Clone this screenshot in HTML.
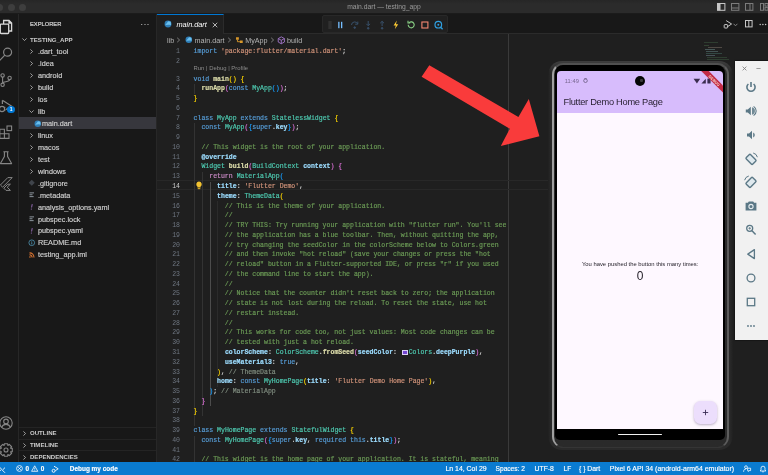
<!DOCTYPE html>
<html><head><meta charset="utf-8">
<style>
*{box-sizing:border-box;margin:0;padding:0}
html,body{width:768px;height:475px;overflow:hidden;background:#1f1f1f}
body{position:relative;font-family:"Liberation Sans",sans-serif;color:#ccc;font-size:7.1px}
.abs{position:absolute}
svg{position:absolute;overflow:visible}
#title{left:0;top:0;width:768px;height:14.4px;background:linear-gradient(180deg,#262626 0,#2b2b2b 4px);border-bottom:1px solid #1b1b1b}
#title .t{left:0;width:768px;top:2.9px;text-align:center;font-size:6.75px;color:#9a9a9a}
.tl{width:7.4px;height:7.4px;border-radius:50%;background:#3e3e3e;top:3.6px}
#act{left:0;top:14px;width:19px;height:448.5px;background:#181818;border-right:1px solid #272727}
#side{left:19px;top:14px;width:138px;height:448.5px;background:#181818;border-right:1px solid #272727}
.row{position:absolute;left:0;width:137px;height:11.95px}
.row.sel{background:#37373d}
.row .nm{position:absolute;top:1.6px;font-size:7.28px;color:#d0d0d0;white-space:nowrap;-webkit-text-stroke:.15px #d0d0d0}
.chev{left:8.6px;top:2.6px;width:7px;height:7px}
.fic{left:8.6px;top:2.2px;width:7.5px;height:7.5px}
.hd{position:absolute;font-size:6.05px;font-weight:bold;color:#ccc;white-space:nowrap}
.sec{position:absolute;left:0;width:137px;height:12px;border-top:1px solid #242424}
#tabs{left:157px;top:14px;width:611px;height:19.5px;background:#181818;border-bottom:1px solid #2b2b2b}
#tab{left:0;top:0;width:66.5px;height:19.5px;background:#1f1f1f;border-top:1px solid #0078d4;border-right:1px solid #2b2b2b}
.ln{position:absolute;left:160px;width:20px;text-align:right;font-family:"Liberation Mono",monospace;font-size:6.52px;line-height:10px;height:10px;color:#6e7681}
.ln.cur{color:#ccc}
.cl{position:absolute;left:193.6px;font-family:"Liberation Mono",monospace;font-size:6.52px;line-height:10px;height:10px;white-space:pre;color:#d4d4d4;-webkit-text-stroke:.18px}
.sw{display:inline-block;width:5.2px;height:5.2px;background:#7446d2;border:.7px solid #dccff6;margin:0 1px 0 1.6px;vertical-align:-.7px}
.bc{position:absolute;top:35.8px;font-size:7.2px;color:#b4b4b4;white-space:nowrap}
#status{left:0;top:462.4px;width:768px;height:13px;background:#0a7bd0;color:#fff;font-size:6.6px}
#status span{position:absolute;top:2.6px;white-space:nowrap;-webkit-text-stroke:.15px #fff}
#emu{left:735.4px;top:61px;width:40px;height:279px;background:#f1f1f1;box-shadow:0 0 1.5px #000}
#emu svg{left:7.9px;width:16px;height:16px}
.ai{left:-1.8px;width:16px;height:16px}
#root{position:absolute;left:-6px;top:-6px;width:780px;height:487px;overflow:hidden;background:#1f1f1f;filter:blur(.45px)}
#w{position:absolute;left:6px;top:6px;width:768px;height:475px}
</style></head><body><div id="root"><div id="w">
<div class="abs" style="left:-6px;top:-6px;width:780px;height:12px;background:#262626"></div>
<div class="abs" style="left:-6px;top:14px;width:10px;height:449px;background:#181818"></div>
<div class="abs" style="left:-6px;top:462.4px;width:780px;height:20px;background:#0a7bd0"></div>
<div class="abs" style="left:760px;top:0;width:14px;height:14.4px;background:#2b2b2b"></div>
<div class="abs" style="left:760px;top:14px;width:14px;height:19.500px;background:#181818;border-bottom:1px solid #2b2b2b"></div>

<!-- editor rulers / guides -->
<div class="abs" style="left:507.5px;top:34px;width:1px;height:429px;background:#3a3a3a"></div>
<div class="abs" style="left:157px;top:180.2px;width:575px;height:10.3px;border-top:1px solid #282828;border-bottom:1px solid #282828"></div>
<!-- indent guides -->
<div class="abs" style="left:193.9px;top:84px;width:1px;height:10px;background:#333"></div>
<div class="abs" style="left:193.9px;top:123px;width:1px;height:303px;background:#333"></div>
<div class="abs" style="left:201.7px;top:172px;width:1px;height:244px;background:#333"></div>
<div class="abs" style="left:209.5px;top:182px;width:1px;height:224px;background:#4c4c4c"></div>
<div class="abs" style="left:217.3px;top:201px;width:1px;height:186px;background:#2b2b2b"></div>
<div class="abs" style="left:193.9px;top:436px;width:1px;height:27px;background:#333"></div>

<!-- code -->
<div class="abs" style="left:193.6px;top:65.4px;font-size:5.9px;color:#8c8c8c;white-space:nowrap">Run | Debug | Profile</div>
<div class="ln" style="top:46.90px">1</div>
<div class="cl" style="top:46.90px"><span style="color:#569cd6">import</span><span style="color:#d4d4d4"> </span><span style="color:#ce9178">'package:flutter/material.dart'</span><span style="color:#d4d4d4">;</span></div>
<div class="ln" style="top:56.66px">2</div>
<div class="ln" style="top:74.60px">3</div>
<div class="cl" style="top:74.60px"><span style="color:#569cd6">void</span><span style="color:#d4d4d4"> </span><span style="color:#dcdcaa;font-weight:bold">main</span><span style="color:#ffd700">()</span><span style="color:#d4d4d4"> </span><span style="color:#ffd700">{</span></div>
<div class="ln" style="top:84.36px">4</div>
<div class="cl" style="top:84.36px"><span style="color:#d4d4d4">  </span><span style="color:#dcdcaa;font-weight:bold">runApp</span><span style="color:#da70d6">(</span><span style="color:#569cd6">const</span><span style="color:#d4d4d4"> </span><span style="color:#4ec9b0">MyApp</span><span style="color:#179fff">()</span><span style="color:#da70d6">)</span><span style="color:#d4d4d4">;</span></div>
<div class="ln" style="top:94.13px">5</div>
<div class="cl" style="top:94.13px"><span style="color:#ffd700">}</span></div>
<div class="ln" style="top:103.89px">6</div>
<div class="ln" style="top:113.66px">7</div>
<div class="cl" style="top:113.66px"><span style="color:#569cd6">class</span><span style="color:#d4d4d4"> </span><span style="color:#4ec9b0">MyApp</span><span style="color:#d4d4d4"> </span><span style="color:#569cd6">extends</span><span style="color:#d4d4d4"> </span><span style="color:#4ec9b0">StatelessWidget</span><span style="color:#d4d4d4"> </span><span style="color:#ffd700">{</span></div>
<div class="ln" style="top:123.43px">8</div>
<div class="cl" style="top:123.43px"><span style="color:#d4d4d4">  </span><span style="color:#569cd6">const</span><span style="color:#d4d4d4"> </span><span style="color:#4ec9b0">MyApp</span><span style="color:#da70d6">(</span><span style="color:#179fff">{</span><span style="color:#569cd6">super</span><span style="color:#d4d4d4">.</span><span style="color:#9cdcfe;font-weight:bold">key</span><span style="color:#179fff">}</span><span style="color:#da70d6">)</span><span style="color:#d4d4d4">;</span></div>
<div class="ln" style="top:133.19px">9</div>
<div class="ln" style="top:142.95px">10</div>
<div class="cl" style="top:142.95px"><span style="color:#6a9955">  // This widget is the root of your application.</span></div>
<div class="ln" style="top:152.72px">11</div>
<div class="cl" style="top:152.72px"><span style="color:#d4d4d4">  </span><span style="color:#9cdcfe;font-weight:bold">@override</span></div>
<div class="ln" style="top:162.49px">12</div>
<div class="cl" style="top:162.49px"><span style="color:#d4d4d4">  </span><span style="color:#4ec9b0">Widget</span><span style="color:#d4d4d4"> </span><span style="color:#dcdcaa;font-weight:bold">build</span><span style="color:#da70d6">(</span><span style="color:#4ec9b0">BuildContext</span><span style="color:#d4d4d4"> </span><span style="color:#9cdcfe;font-weight:bold">context</span><span style="color:#da70d6">)</span><span style="color:#d4d4d4"> </span><span style="color:#da70d6">{</span></div>
<div class="ln" style="top:172.25px">13</div>
<div class="cl" style="top:172.25px"><span style="color:#d4d4d4">    </span><span style="color:#c586c0">return</span><span style="color:#d4d4d4"> </span><span style="color:#4ec9b0">MaterialApp</span><span style="color:#179fff">(</span></div>
<div class="ln cur" style="top:182.01px">14</div>
<div class="cl" style="top:182.01px"><span style="color:#d4d4d4">      </span><span style="color:#9cdcfe;font-weight:bold">title</span><span style="color:#d4d4d4">: </span><span style="color:#ce9178">'Flutter Demo'</span><span style="color:#d4d4d4">,</span></div>
<div class="ln" style="top:191.78px">15</div>
<div class="cl" style="top:191.78px"><span style="color:#d4d4d4">      </span><span style="color:#9cdcfe;font-weight:bold">theme</span><span style="color:#d4d4d4">: </span><span style="color:#4ec9b0">ThemeData</span><span style="color:#ffd700">(</span></div>
<div class="ln" style="top:201.55px">16</div>
<div class="cl" style="top:201.55px"><span style="color:#6a9955">        // This is the theme of your application.</span></div>
<div class="ln" style="top:211.31px">17</div>
<div class="cl" style="top:211.31px"><span style="color:#6a9955">        //</span></div>
<div class="ln" style="top:221.08px">18</div>
<div class="cl" style="top:221.08px"><span style="color:#6a9955">        // TRY THIS: Try running your application with "flutter run". You'll see</span></div>
<div class="ln" style="top:230.84px">19</div>
<div class="cl" style="top:230.84px"><span style="color:#6a9955">        // the application has a blue toolbar. Then, without quitting the app,</span></div>
<div class="ln" style="top:240.60px">20</div>
<div class="cl" style="top:240.60px"><span style="color:#6a9955">        // try changing the seedColor in the colorScheme below to Colors.green</span></div>
<div class="ln" style="top:250.37px">21</div>
<div class="cl" style="top:250.37px"><span style="color:#6a9955">        // and then invoke "hot reload" (save your changes or press the "hot</span></div>
<div class="ln" style="top:260.13px">22</div>
<div class="cl" style="top:260.13px"><span style="color:#6a9955">        // reload" button in a Flutter-supported IDE, or press "r" if you used</span></div>
<div class="ln" style="top:269.90px">23</div>
<div class="cl" style="top:269.90px"><span style="color:#6a9955">        // the command line to start the app).</span></div>
<div class="ln" style="top:279.66px">24</div>
<div class="cl" style="top:279.66px"><span style="color:#6a9955">        //</span></div>
<div class="ln" style="top:289.43px">25</div>
<div class="cl" style="top:289.43px"><span style="color:#6a9955">        // Notice that the counter didn't reset back to zero; the application</span></div>
<div class="ln" style="top:299.20px">26</div>
<div class="cl" style="top:299.20px"><span style="color:#6a9955">        // state is not lost during the reload. To reset the state, use hot</span></div>
<div class="ln" style="top:308.96px">27</div>
<div class="cl" style="top:308.96px"><span style="color:#6a9955">        // restart instead.</span></div>
<div class="ln" style="top:318.73px">28</div>
<div class="cl" style="top:318.73px"><span style="color:#6a9955">        //</span></div>
<div class="ln" style="top:328.49px">29</div>
<div class="cl" style="top:328.49px"><span style="color:#6a9955">        // This works for code too, not just values: Most code changes can be</span></div>
<div class="ln" style="top:338.25px">30</div>
<div class="cl" style="top:338.25px"><span style="color:#6a9955">        // tested with just a hot reload.</span></div>
<div class="ln" style="top:348.02px">31</div>
<div class="cl" style="top:348.02px"><span style="color:#d4d4d4">        </span><span style="color:#9cdcfe;font-weight:bold">colorScheme</span><span style="color:#d4d4d4">: </span><span style="color:#4ec9b0">ColorScheme</span><span style="color:#d4d4d4">.</span><span style="color:#dcdcaa;font-weight:bold">fromSeed</span><span style="color:#da70d6">(</span><span style="color:#9cdcfe;font-weight:bold">seedColor</span><span style="color:#d4d4d4">: </span><span class="sw"></span><span style="color:#4ec9b0">Colors</span><span style="color:#d4d4d4">.</span><span style="color:#9cdcfe;font-weight:bold">deepPurple</span><span style="color:#da70d6">)</span><span style="color:#d4d4d4">,</span></div>
<div class="ln" style="top:357.78px">32</div>
<div class="cl" style="top:357.78px"><span style="color:#d4d4d4">        </span><span style="color:#9cdcfe;font-weight:bold">useMaterial3</span><span style="color:#d4d4d4">: </span><span style="color:#569cd6">true</span><span style="color:#d4d4d4">,</span></div>
<div class="ln" style="top:367.55px">33</div>
<div class="cl" style="top:367.55px"><span style="color:#d4d4d4">      </span><span style="color:#ffd700">)</span><span style="color:#d4d4d4">, </span><span style="color:#7f8c7f">// ThemeData</span></div>
<div class="ln" style="top:377.32px">34</div>
<div class="cl" style="top:377.32px"><span style="color:#d4d4d4">      </span><span style="color:#9cdcfe;font-weight:bold">home</span><span style="color:#d4d4d4">: </span><span style="color:#569cd6">const</span><span style="color:#d4d4d4"> </span><span style="color:#4ec9b0">MyHomePage</span><span style="color:#ffd700">(</span><span style="color:#9cdcfe;font-weight:bold">title</span><span style="color:#d4d4d4">: </span><span style="color:#ce9178">'Flutter Demo Home Page'</span><span style="color:#ffd700">)</span><span style="color:#d4d4d4">,</span></div>
<div class="ln" style="top:387.08px">35</div>
<div class="cl" style="top:387.08px"><span style="color:#d4d4d4">    </span><span style="color:#179fff">)</span><span style="color:#d4d4d4">; </span><span style="color:#7f8c7f">// MaterialApp</span></div>
<div class="ln" style="top:396.85px">36</div>
<div class="cl" style="top:396.85px"><span style="color:#d4d4d4">  </span><span style="color:#da70d6">}</span></div>
<div class="ln" style="top:406.61px">37</div>
<div class="cl" style="top:406.61px"><span style="color:#ffd700">}</span></div>
<div class="ln" style="top:416.38px">38</div>
<div class="ln" style="top:426.14px">39</div>
<div class="cl" style="top:426.14px"><span style="color:#569cd6">class</span><span style="color:#d4d4d4"> </span><span style="color:#4ec9b0">MyHomePage</span><span style="color:#d4d4d4"> </span><span style="color:#569cd6">extends</span><span style="color:#d4d4d4"> </span><span style="color:#4ec9b0">StatefulWidget</span><span style="color:#d4d4d4"> </span><span style="color:#ffd700">{</span></div>
<div class="ln" style="top:435.90px">40</div>
<div class="cl" style="top:435.90px"><span style="color:#d4d4d4">  </span><span style="color:#569cd6">const</span><span style="color:#d4d4d4"> </span><span style="color:#4ec9b0">MyHomePage</span><span style="color:#da70d6">(</span><span style="color:#179fff">{</span><span style="color:#569cd6">super</span><span style="color:#d4d4d4">.</span><span style="color:#9cdcfe;font-weight:bold">key</span><span style="color:#d4d4d4">, </span><span style="color:#569cd6">required</span><span style="color:#d4d4d4"> </span><span style="color:#569cd6">this</span><span style="color:#d4d4d4">.</span><span style="color:#9cdcfe;font-weight:bold">title</span><span style="color:#179fff">}</span><span style="color:#da70d6">)</span><span style="color:#d4d4d4">;</span></div>
<div class="ln" style="top:445.67px">41</div>
<div class="ln" style="top:455.44px">42</div>
<div class="cl" style="top:455.44px"><span style="color:#6a9955">  // This widget is the home page of your application. It is stateful, meaning</span></div>
<!-- lightbulb -->
<svg style="left:195.2px;top:181px;width:8px;height:9px" viewBox="0 0 8 9"><path d="M4 .6a2.7 2.7 0 0 0-1.6 4.9v1h3.2v-1A2.7 2.7 0 0 0 4 .6z" fill="#f2c230"/><rect x="2.7" y="7" width="2.6" height="1.2" fill="#caa22a"/></svg>

<!-- minimap -->
<div class="abs" style="left:704px;top:41px;width:34px;height:20px;opacity:.33">
 <div class="abs" style="left:0;top:1px;width:14px;height:1px;background:#4f7a55"></div>
 <div class="abs" style="left:0;top:4px;width:5px;height:1px;background:#5a8a5a"></div>
 <div class="abs" style="left:4px;top:5.5px;width:14px;height:1px;background:#b0a090"></div>
 <div class="abs" style="left:1px;top:8px;width:10px;height:1px;background:#9cc"></div>
 <div class="abs" style="left:2px;top:10px;width:12px;height:1px;background:#8bb"></div>
 <div class="abs" style="left:2px;top:12px;width:16px;height:1px;background:#5a9a8a"></div>
 <div class="abs" style="left:2px;top:14px;width:9px;height:1px;background:#9bc"></div>
 <div class="abs" style="left:3px;top:16px;width:20px;height:1px;background:#4f7a55"></div>
 <div class="abs" style="left:3px;top:18px;width:22px;height:1px;background:#4f7a55"></div>
</div>

<!-- red arrow -->
<svg style="left:0;top:0;width:768px;height:475px" viewBox="0 0 768 475"><polygon points="429.3,65.3 518.4,117 528.8,99 539.4,136.2 500.8,146 509.8,128.8 421.6,76.8" fill="#f93b3b"/></svg>

<!-- title bar -->
<div id="title" class="abs">
 <div class="abs tl" style="left:-4px"></div><div class="abs tl" style="left:7.6px"></div><div class="abs tl" style="left:18.8px"></div>
 <div class="abs t">main.dart — testing_app</div>
 <svg style="left:717px;top:3px;width:8.4px;height:7.8px" viewBox="0 0 8.4 7.8"><rect x=".5" y=".5" width="7.4" height="6.8" fill="none" stroke="#c8c8c8" stroke-width="1"/><rect x=".5" y=".5" width="3" height="6.8" fill="#c8c8c8"/></svg>
 <svg style="left:731px;top:3px;width:8.4px;height:7.8px" viewBox="0 0 8.4 7.8"><rect x=".5" y=".5" width="7.4" height="6.8" fill="none" stroke="#7c7c7c" stroke-width="1"/><path d="M.5 5H7.9" stroke="#7c7c7c" stroke-width="1"/></svg>
 <svg style="left:744.7px;top:3px;width:8.4px;height:7.8px" viewBox="0 0 8.4 7.8"><rect x=".5" y=".5" width="7.4" height="6.8" fill="none" stroke="#7c7c7c" stroke-width="1"/><path d="M5 .5V7.3" stroke="#7c7c7c" stroke-width="1"/></svg>
 <svg style="left:760px;top:3px;width:8.4px;height:7.8px" viewBox="0 0 8.4 7.8"><rect x=".5" y=".5" width="3" height="6.8" fill="none" stroke="#7c7c7c" stroke-width="1"/><rect x="5" y=".5" width="3" height="2.6" fill="none" stroke="#7c7c7c" stroke-width="1"/><rect x="5" y="4.6" width="3" height="2.6" fill="none" stroke="#7c7c7c" stroke-width="1"/></svg>
</div>

<!-- tabs -->
<div id="tabs" class="abs">
 <div id="tab" class="abs">
  <svg style="left:7.3px;top:5.2px;width:8px;height:8px" viewBox="0 0 10 10"><circle cx="5" cy="5" r="4.3" fill="#2f7fb8"/><path d="M1.6 6.2 L5.4 1.6 L8.4 2.2 L8.8 6.400 L6.2 5.8 Z" fill="#6cc0ee"/></svg>
  <span class="abs" style="left:19.4px;top:5.4px;font-size:7.3px;font-style:italic;color:#fff;white-space:nowrap">main.dart</span>
  <svg style="left:55.2px;top:6.6px;width:6px;height:6px" viewBox="0 0 8 8"><path d="M1 1L7 7M7 1L1 7" stroke="#d0d0d0" stroke-width="1.1"/></svg>
 </div>
 <!-- debug toolbar -->
 <div class="abs" style="left:165.3px;top:1px;width:126px;height:17.8px;background:#202020;border:1px solid #282828;border-radius:2px">
  <svg style="left:0;top:0;width:126px;height:16px" viewBox="323 15 126 16">
   <g fill="#5a5a5a"><rect x="328.6" y="20.5" width="1" height="1"/><rect x="330.4" y="20.5" width="1" height="1"/><rect x="328.6" y="22.5" width="1" height="1"/><rect x="330.4" y="22.5" width="1" height="1"/><rect x="328.6" y="24.5" width="1" height="1"/><rect x="330.4" y="24.5" width="1" height="1"/><rect x="328.6" y="26.5" width="1" height="1"/><rect x="330.4" y="26.5" width="1" height="1"/></g>
   <g fill="#75beff"><rect x="338.2" y="20.8" width="1.3" height="6.4"/><rect x="341" y="20.8" width="1.3" height="6.4"/></g>
   <g stroke="#38506a" fill="none" stroke-width="1"><path d="M351.5 24a3.2 3.2 0 0 1 6.2-1M357.8 20.6v2.6h-2.6"/><circle cx="354.7" cy="26.6" r=".8" fill="#38506a"/>
    <path d="M368.2 20v4.6M366.3 22.8l1.9 1.9 1.9-1.9"/><circle cx="368.2" cy="27.3" r=".8" fill="#38506a"/>
    <path d="M382.1 25v-4.6M380.2 22.2l1.9-1.9 1.9 1.9"/><circle cx="382.1" cy="27.3" r=".8" fill="#38506a"/></g>
   <path d="M396.8 19.6l-3.2 4.8h2.2l-1 3.8 3.4-5h-2.2z" fill="#ffcc33"/>
   <path d="M408.2 23.8a3 3 0 1 0 1-2.2M408 19.8v2.2h2.2" fill="none" stroke="#89d185" stroke-width="1.1"/>
   <rect x="421.9" y="21" width="6" height="6" fill="none" stroke="#f48771" stroke-width="1.1"/>
   <circle cx="438.3" cy="23.7" r="3.3" fill="none" stroke="#2f9fe0" stroke-width="1.2"/><path d="M440.6 26.2l2 2" stroke="#2f9fe0" stroke-width="1.3"/><circle cx="438.3" cy="23.7" r="1" fill="#2f9fe0"/>
  </svg>
 </div>
 <!-- editor actions -->
 <svg style="left:565.5px;top:4.5px;width:12px;height:11px" viewBox="0 0 12 11"><path d="M3.2 1.6L8.6 5 4.6 7.6" fill="none" stroke="#c8c8c8" stroke-width="1"/><rect x="1.2" y="5.6" width="3.4" height="3.4" rx=".6" fill="none" stroke="#c8c8c8" stroke-width="1"/></svg>
 <svg style="left:576px;top:8.5px;width:5px;height:4px" viewBox="0 0 5 4"><path d="M.6.8L2.5 2.8 4.4.8" fill="none" stroke="#8a8a8a" stroke-width=".9"/></svg>
 <svg style="left:587.8px;top:6.2px;width:7.6px;height:7.4px" viewBox="0 0 7.6 7.4"><rect x=".5" y=".5" width="6.6" height="6.4" fill="none" stroke="#c8c8c8" stroke-width="1"/><path d="M3.8.5V6.9" stroke="#c8c8c8" stroke-width="1"/></svg>
 <svg style="left:602px;top:9.2px;width:8px;height:3px" viewBox="0 0 8 3"><circle cx="1.2" cy="1.4" r=".75" fill="#c8c8c8"/><circle cx="3.9" cy="1.4" r=".75" fill="#c8c8c8"/><circle cx="6.6" cy="1.4" r=".75" fill="#c8c8c8"/></svg>
</div>

<!-- breadcrumbs -->
<div class="bc" style="left:167px">lib</div>
<svg style="left:176px;top:37px;width:5px;height:6px" viewBox="0 0 5 6"><path d="M1.2.8L3.6 3 1.2 5.2" fill="none" stroke="#888" stroke-width=".9"/></svg>
<svg style="left:184.5px;top:36.2px;width:7.6px;height:7.6px" viewBox="0 0 10 10"><circle cx="5" cy="5" r="4.3" fill="#2f7fb8"/><path d="M1.6 6.2 L5.4 1.6 L8.4 2.2 L8.8 6.400 L6.2 5.8 Z" fill="#6cc0ee"/></svg>
<div class="bc" style="left:194.6px">main.dart</div>
<svg style="left:227px;top:37px;width:5px;height:6px" viewBox="0 0 5 6"><path d="M1.2.8L3.6 3 1.2 5.2" fill="none" stroke="#888" stroke-width=".9"/></svg>
<svg style="left:234.6px;top:36px;width:8.4px;height:8.4px" viewBox="0 0 10 10"><path d="M1.200 1.600h3.400v2.800H1.200zM5.800 5.400h3.400v2.800H5.800z" fill="#d9982a"/><path d="M2.900 4.400v2.400h3" fill="none" stroke="#d9982a" stroke-width="1.100"/></svg>
<div class="bc" style="left:245.2px">MyApp</div>
<svg style="left:270px;top:37px;width:5px;height:6px" viewBox="0 0 5 6"><path d="M1.2.8L3.6 3 1.2 5.2" fill="none" stroke="#888" stroke-width=".9"/></svg>
<svg style="left:276.8px;top:35.8px;width:8.6px;height:8.6px" viewBox="0 0 10 10"><path d="M5 1L8.6 3v4L5 9 1.4 7V3z M1.4 3L5 5l3.6-2M5 5v4" fill="none" stroke="#a477cc" stroke-width="1.05"/></svg>
<div class="bc" style="left:287px">build</div>

<!-- activity bar -->
<div id="act" class="abs">
<svg class="ai" style="top:5.4px" viewBox="0 0 16 16"><path d="M5.6 5V1.5H11L13.6 4.100V12H10.8M11 1.5V4.100H13.6" fill="none" stroke="#d9d9d9" stroke-width="1.3"/><rect x="2.3" y="5.1" width="8.4" height="9.4" rx=".8" fill="none" stroke="#d9d9d9" stroke-width="1.3"/></svg>
<svg class="ai" style="top:32.0px" viewBox="0 0 16 16"><circle cx="9.6" cy="6.2" r="4" fill="none" stroke="#868686" stroke-width="1.2"/><path d="M6.8 9.2L1.8 14.4" stroke="#868686" stroke-width="1.2"/></svg>
<svg class="ai" style="top:58.0px" viewBox="0 0 16 16"><circle cx="4.6" cy="3.4" r="1.7" fill="none" stroke="#868686" stroke-width="1.1"/><circle cx="4.6" cy="12.8" r="1.7" fill="none" stroke="#868686" stroke-width="1.1"/><circle cx="11.6" cy="6" r="1.7" fill="none" stroke="#868686" stroke-width="1.1"/><path d="M4.6 5.1v6M11.6 7.7c0 2.6-7 1.4-7 3.6" fill="none" stroke="#868686" stroke-width="1.1"/></svg>
<svg class="ai" style="top:84.0px" viewBox="0 0 16 16"><path d="M4.4 2.2L13.4 8 7.6 11.8M4.4 2.2V6" fill="none" stroke="#868686" stroke-width="1.2"/><circle cx="4" cy="11" r="2.6" fill="none" stroke="#868686" stroke-width="1.1"/><path d="M.4 9.4h1.4M.4 12.6h1.4M6.2 9.4h1.2M6.2 12.6h1.2" stroke="#868686" stroke-width=".9"/></svg>
<div class="abs" style="left:7.4px;top:91.9px;width:7.4px;height:7.4px;border-radius:50%;background:#0078d4;color:#fff;font-size:5px;font-weight:bold;text-align:center;line-height:7.4px">1</div>
<svg class="ai" style="top:110.0px" viewBox="0 0 16 16"><path d="M1.8 5.2h4.6v4.6H1.8zM6.4 9.8h4.6v4.6H6.4zM1.8 9.8v4.6h4.6" fill="none" stroke="#868686" stroke-width="1.1"/><rect x="9" y="2" width="4.6" height="4.6" fill="none" stroke="#868686" stroke-width="1.1"/></svg>
<svg class="ai" style="top:136.0px" viewBox="0 0 16 16"><path d="M5.4 1.8h5.2M6.4 1.8v4.6L2.4 13.6h11.2L9.6 6.4V1.8" fill="none" stroke="#868686" stroke-width="1.1" stroke-linejoin="round"/></svg>
<svg class="ai" style="top:162.0px" viewBox="0 0 16 16"><path d="M9.8 1.6L2.4 9l2.2 2.2 9.6-9.6zM9.8 8.2l-4 4 2.2 2.2h4.4l-3.2-3.2 3.2-3z" fill="none" stroke="#868686" stroke-width="1" stroke-linejoin="round"/></svg>
<svg class="ai" style="top:401.2px" viewBox="0 0 16 16"><circle cx="8" cy="8" r="6.2" fill="none" stroke="#868686" stroke-width="1.1"/><circle cx="8" cy="6.4" r="2.3" fill="none" stroke="#868686" stroke-width="1.1"/><path d="M3.6 12.4c.8-2.2 2.4-3 4.4-3s3.600.8 4.400 3" fill="none" stroke="#868686" stroke-width="1.1"/></svg>
<svg class="ai" style="top:427.8px" viewBox="0 0 16 16"><polygon points="14.28,6.33 14.28,9.67 12.53,9.86 12.52,9.89 13.62,11.26 11.26,13.62 9.89,12.52 9.86,12.53 9.67,14.28 6.33,14.28 6.14,12.53 6.11,12.52 4.74,13.62 2.38,11.26 3.48,9.89 3.47,9.86 1.72,9.67 1.72,6.33 3.47,6.14 3.48,6.11 2.38,4.74 4.74,2.38 6.11,3.48 6.14,3.47 6.33,1.72 9.67,1.72 9.86,3.47 9.89,3.48 11.26,2.38 13.62,4.74 12.52,6.11 12.53,6.14" fill="none" stroke="#868686" stroke-width="1.1" stroke-linejoin="round"/><circle cx="8" cy="8" r="2" fill="none" stroke="#868686" stroke-width="1.1"/></svg>
</div>

<!-- sidebar -->
<div id="side" class="abs">
 <div class="abs" style="left:11px;top:7.2px;font-size:5.75px;color:#d2d2d2;letter-spacing:0;-webkit-text-stroke:.2px #d2d2d2">EXPLORER</div>
 <div class="abs" style="left:121.2px;top:5.2px;font-size:9px;color:#ccc;letter-spacing:.2px">···</div>
 <svg style="left:2.2px;top:22.2px;width:7px;height:7px" viewBox="0 0 10 10"><path d="M2 3.5 L5 6.5 L8 3.5" fill="none" stroke="#c5c5c5" stroke-width="1.1"/></svg>
 <div class="hd" style="left:11px;top:22.4px;font-size:6.15px">TESTING_APP</div>
 <div class="abs" style="left:0;top:-14px;width:137px;height:400px">
<div class="row" style="top:45.62px"><svg class="chev" viewBox="0 0 10 10"><path d="M3.5 2 L6.5 5 L3.5 8" fill="none" stroke="#c5c5c5" stroke-width="1.1"/></svg><span class="nm" style="left:19px">.dart_tool</span></div>
<div class="row" style="top:57.57px"><svg class="chev" viewBox="0 0 10 10"><path d="M3.5 2 L6.5 5 L3.5 8" fill="none" stroke="#c5c5c5" stroke-width="1.1"/></svg><span class="nm" style="left:19px">.idea</span></div>
<div class="row" style="top:69.53px"><svg class="chev" viewBox="0 0 10 10"><path d="M3.5 2 L6.5 5 L3.5 8" fill="none" stroke="#c5c5c5" stroke-width="1.1"/></svg><span class="nm" style="left:19px">android</span></div>
<div class="row" style="top:81.47px"><svg class="chev" viewBox="0 0 10 10"><path d="M3.5 2 L6.5 5 L3.5 8" fill="none" stroke="#c5c5c5" stroke-width="1.1"/></svg><span class="nm" style="left:19px">build</span></div>
<div class="row" style="top:93.43px"><svg class="chev" viewBox="0 0 10 10"><path d="M3.5 2 L6.5 5 L3.5 8" fill="none" stroke="#c5c5c5" stroke-width="1.1"/></svg><span class="nm" style="left:19px">ios</span></div>
<div class="row" style="top:105.38px"><svg class="chev" viewBox="0 0 10 10"><path d="M2 3.5 L5 6.5 L8 3.5" fill="none" stroke="#c5c5c5" stroke-width="1.1"/></svg><span class="nm" style="left:19px">lib</span></div>
<div class="row sel" style="top:117.32px"><svg class="fic" style="left:14.6px" viewBox="0 0 10 10"><circle cx="5" cy="5" r="4.3" fill="#2f7fb8"/><path d="M1.6 6.2 L5.4 1.6 L8.4 2.2 L8.8 6.400 L6.2 5.8 Z" fill="#6cc0ee"/></svg><span class="nm" style="left:23px">main.dart</span></div>
<div class="row" style="top:129.28px"><svg class="chev" viewBox="0 0 10 10"><path d="M3.5 2 L6.5 5 L3.5 8" fill="none" stroke="#c5c5c5" stroke-width="1.1"/></svg><span class="nm" style="left:19px">linux</span></div>
<div class="row" style="top:141.22px"><svg class="chev" viewBox="0 0 10 10"><path d="M3.5 2 L6.5 5 L3.5 8" fill="none" stroke="#c5c5c5" stroke-width="1.1"/></svg><span class="nm" style="left:19px">macos</span></div>
<div class="row" style="top:153.18px"><svg class="chev" viewBox="0 0 10 10"><path d="M3.5 2 L6.5 5 L3.5 8" fill="none" stroke="#c5c5c5" stroke-width="1.1"/></svg><span class="nm" style="left:19px">test</span></div>
<div class="row" style="top:165.12px"><svg class="chev" viewBox="0 0 10 10"><path d="M3.5 2 L6.5 5 L3.5 8" fill="none" stroke="#c5c5c5" stroke-width="1.1"/></svg><span class="nm" style="left:19px">windows</span></div>
<div class="row" style="top:177.07px"><svg class="fic" viewBox="0 0 10 10"><rect x="2.2" y="2.2" width="5.6" height="5.6" transform="rotate(45 5 5)" fill="#3f444b"/></svg><span class="nm" style="left:19px">.gitignore</span></div>
<div class="row" style="top:189.02px"><svg class="fic" viewBox="0 0 10 10"><path d="M2 2.5H8M2 5H6M2 7.5H7.5" stroke="#9aa4ad" stroke-width="1.2"/></svg><span class="nm" style="left:19px">.metadata</span></div>
<div class="row" style="top:200.97px"><svg class="fic" viewBox="0 0 10 10"><path d="M5.6 1.5 L4.8 6" stroke="#a074c4" stroke-width="1.2"/><circle cx="4.5" cy="8" r=".8" fill="#a074c4"/></svg><span class="nm" style="left:19px">analysis_options.yaml</span></div>
<div class="row" style="top:212.92px"><svg class="fic" viewBox="0 0 10 10"><path d="M2 2.5H8M2 5H6M2 7.5H7.5" stroke="#9aa4ad" stroke-width="1.2"/></svg><span class="nm" style="left:19px">pubspec.lock</span></div>
<div class="row" style="top:224.88px"><svg class="fic" viewBox="0 0 10 10"><path d="M5.6 1.5 L4.8 6" stroke="#a074c4" stroke-width="1.2"/><circle cx="4.5" cy="8" r=".8" fill="#a074c4"/></svg><span class="nm" style="left:19px">pubspec.yaml</span></div>
<div class="row" style="top:236.82px"><svg class="fic" viewBox="0 0 10 10"><circle cx="5" cy="5" r="3.8" fill="none" stroke="#519aba" stroke-width="1"/><path d="M5 4.3V7.2" stroke="#519aba" stroke-width="1.1"/><circle cx="5" cy="3" r=".6" fill="#519aba"/></svg><span class="nm" style="left:19px">README.md</span></div>
<div class="row" style="top:248.77px"><svg class="fic" viewBox="0 0 10 10"><path d="M2 2.5 A6 6 0 0 1 8 8.5 M2 5 A3.5 3.5 0 0 1 5.5 8.5" fill="none" stroke="#e37933" stroke-width="1.4"/><circle cx="2.6" cy="7.9" r="1" fill="#e37933"/></svg><span class="nm" style="left:19px">testing_app.iml</span></div>
 </div>
 <div class="sec" style="top:412.6px"><svg class="chev" style="left:2.2px;top:2.6px" viewBox="0 0 10 10"><path d="M3.5 2 L6.5 5 L3.5 8" fill="none" stroke="#c5c5c5" stroke-width="1.1"/></svg><div class="hd" style="left:11px;top:2.5px">OUTLINE</div></div>
 <div class="sec" style="top:424.5px"><svg class="chev" style="left:2.2px;top:2.6px" viewBox="0 0 10 10"><path d="M3.5 2 L6.5 5 L3.5 8" fill="none" stroke="#c5c5c5" stroke-width="1.1"/></svg><div class="hd" style="left:11px;top:2.5px">TIMELINE</div></div>
 <div class="sec" style="top:436.4px"><svg class="chev" style="left:2.2px;top:2.6px" viewBox="0 0 10 10"><path d="M3.5 2 L6.5 5 L3.5 8" fill="none" stroke="#c5c5c5" stroke-width="1.1"/></svg><div class="hd" style="left:11px;top:2.5px">DEPENDENCIES</div></div>
</div>

<!-- status bar -->
<div id="status" class="abs">
 <svg style="left:-2px;top:3.2px;width:8px;height:7px" viewBox="0 0 8 7"><path d="M1 .6L3.600 3.200 1 5.800M7 1.600L4.400 4.200 7 6.800" fill="none" stroke="#fff" stroke-width=".9"/></svg>
 <svg style="left:16.2px;top:3px;width:7px;height:7px" viewBox="0 0 7 7"><circle cx="3.5" cy="3.5" r="2.9" fill="none" stroke="#fff" stroke-width=".8"/><path d="M2.2 2.2l2.6 2.6M4.8 2.2L2.2 4.8" stroke="#fff" stroke-width=".8"/></svg>
 <span style="left:25.4px;font-weight:bold;font-size:6.4px">0</span>
 <svg style="left:30.6px;top:2.8px;width:7.4px;height:7px" viewBox="0 0 7.4 7"><path d="M3.7.8L6.8 6.3H.6z" fill="none" stroke="#fff" stroke-width=".8"/><path d="M3.7 2.8v1.8M3.7 5.1v.6" stroke="#fff" stroke-width=".7"/></svg>
 <span style="left:40.7px;font-weight:bold;font-size:6.4px">0</span>
 <svg style="left:51px;top:2.6px;width:9px;height:8px" viewBox="0 0 9 8"><path d="M3 1.2L7.2 3.8 4.4 5.6" fill="none" stroke="#fff" stroke-width=".9"/><circle cx="2.6" cy="5.8" r="1.5" fill="none" stroke="#fff" stroke-width=".9"/></svg>
 <span style="left:69.8px;font-weight:bold;font-size:6.45px">Debug my code</span>
 <span style="left:445.4px;font-size:6.95px;top:2.4px">Ln 14, Col 29</span>
 <span style="left:495.6px">Spaces: 2</span>
 <span style="left:534.6px;font-size:6.8px">UTF-8</span>
 <span style="left:563.6px">LF</span>
 <span style="left:579px;font-size:6.8px">{ } Dart</span>
 <span style="left:609.8px;font-size:6.97px;top:2.4px">Pixel 6 API 34 (android-arm64 emulator)</span>
 <svg style="left:742.5px;top:2.8px;width:8px;height:8px" viewBox="0 0 8 8"><circle cx="3" cy="2.2" r="1.4" fill="none" stroke="#fff" stroke-width=".8"/><path d="M.6 6.8c0-2 1-2.8 2.4-2.8M4.6 3.2h3v2.4H6.2l-.8.9v-.9h-.8z" fill="none" stroke="#fff" stroke-width=".8"/></svg>
 <svg style="left:758.6px;top:2.8px;width:8px;height:8px" viewBox="0 0 8 8"><path d="M1.2 6h5.6L6 4.8V3.2a2 2 0 0 0-4 0v1.6zM3.2 6.8h1.6" fill="none" stroke="#fff" stroke-width=".8"/></svg>
</div>

<!-- phone -->
<div class="abs" style="left:548.3px;top:60.5px;width:185px;height:389.3px;border-radius:14px;background:linear-gradient(90deg,#1f1f1f 0,rgba(31,31,31,0) 3.2px,rgba(31,31,31,0) 181.5px,#202020 185px),linear-gradient(180deg,#3e3e3e 0,#363636 4px,#2b2b2b 12px,#2a2a2a 100%)"></div>
<div class="abs" style="left:552.2px;top:62.5px;width:176.4px;height:385px;border-radius:11.5px;border-style:solid;border-width:2.1px 2.8px 1.6px 2.5px;border-color:#505050 #5c5c5c #353535 #a0a0a0;filter:blur(.45px)"></div>
<div class="abs" style="left:554.9px;top:64.8px;width:169.9px;height:374.8px;border-radius:8px 8px 5px 5px;background:#000"></div>
<div class="abs" style="left:557.2px;top:71px;width:165.7px;height:367.8px;background:#000;border-radius:4px 4px 3px 3px;overflow:hidden">
 <div class="abs" style="left:0;top:0;width:166px;height:42.2px;background:#d7bcfc"></div>
 <div class="abs" style="left:0;top:42.2px;width:166px;height:316.2px;background:#fef8ff"></div>
 <!-- status -->
 <div class="abs" style="left:7.6px;top:7.2px;font-size:5.7px;color:#77668f;letter-spacing:.1px">11:49</div>
 <svg style="left:26px;top:7.4px;width:5px;height:5px" viewBox="0 0 5 5"><circle cx="2.5" cy="2.7" r="1.8" fill="none" stroke="#6a5a80" stroke-width=".8"/><path d="M1.3.7h2.4" stroke="#6a5a80" stroke-width=".8"/></svg>
 <div class="abs" style="left:77.6px;top:4.8px;width:10.4px;height:10.4px;border-radius:50%;background:#050505"></div>
 <div class="abs" style="left:83.2px;top:8.4px;width:2.2px;height:2.2px;border-radius:50%;background:#3a3a3a"></div>
 <svg style="left:136px;top:6.6px;width:24px;height:6px" viewBox="0 0 24 6"><path d="M.6.8h6.6L3.9 5.4z" fill="#3a2c4e"/><path d="M8.4 5.4h4.4V.8z" fill="#3a2c4e"/><rect x="14.4" y=".4" width="3.2" height="5" rx=".5" fill="#3a2c4e"/></svg>
 <!-- debug banner -->
 <svg style="left:135px;top:0;width:31px;height:31px" viewBox="0 0 31 31"><path d="M9.2 0H16.8L31 14.4V21.600z" fill="#c22b46"/><text x="21.4" y="10.6" font-size="3.7" font-weight="bold" fill="#ffe2d4" transform="rotate(45 21.4 10.6)" text-anchor="middle" font-family="Liberation Sans" letter-spacing=".2">DEBUG</text></svg>
 <div class="abs" style="left:6.4px;top:25.6px;font-size:9.25px;color:#2a2233;letter-spacing:-.27px;white-space:nowrap">Flutter Demo Home Page</div>
 <div class="abs" style="left:0;top:190.2px;width:166px;text-align:center;font-size:5.85px;color:#26222b;white-space:nowrap">You have pushed the button this many times:</div>
 <div class="abs" style="left:0;top:198.2px;width:166px;text-align:center;font-size:12px;color:#26222b">0</div>
 <!-- fab -->
 <div class="abs" style="left:136.4px;top:330.2px;width:23px;height:22.8px;border-radius:6.5px;background:#ecdefc;box-shadow:0 1px 2.5px rgba(60,40,90,.35)"></div>
 <svg style="left:144.4px;top:338.2px;width:7px;height:7px" viewBox="0 0 7 7"><path d="M3.5.8v5.4M.8 3.5h5.4" stroke="#3a2d55" stroke-width=".9"/></svg>
 <!-- nav pill -->
 <div class="abs" style="left:60.8px;top:362.6px;width:43.8px;height:1.9px;border-radius:1px;background:#f2f2f2"></div>
</div>

<!-- emulator toolbar -->
<div id="emu" class="abs">
 <svg style="left:7px;top:5.2px;width:5px;height:5px" viewBox="0 0 5 5"><path d="M.6.6l3.8 3.8M4.4.6L.6 4.4" stroke="#7a7a7a" stroke-width=".8"/></svg>
 <svg style="left:20.8px;top:5.4px;width:5px;height:5px" viewBox="0 0 5 5"><path d="M.4 2.5h4.2" stroke="#8a8a8a" stroke-width=".8"/></svg>
<svg style="top:17.8px" viewBox="0 0 16 16"><path d="M5.400 5a4.100 4.100 0 1 0 5.200 0" fill="none" stroke="#5b7886" stroke-width="1.600"/><path d="M8 3.100v5" stroke="#5b7886" stroke-width="1.600"/></svg>
<svg style="top:41.7px" viewBox="0 0 16 16"><path d="M2.800 6.500h2L7.800 3.800v8.400L4.800 9.500h-2z" fill="#5b7886"/><path d="M9 4.300a3.800 3.800 0 0 1 0 7.400z" fill="#5b7886" opacity=".85"/><path d="M10.600 3.400a5.400 5.400 0 0 1 0 9.200" fill="none" stroke="#5b7886" stroke-width="1.100"/></svg>
<svg style="top:65.6px" viewBox="0 0 16 16"><path d="M4 6.500h2L9 3.800v8.400L6 9.500H4z" fill="#5b7886"/><path d="M10.200 5.600a2.600 2.600 0 0 1 0 4.800z" fill="#5b7886"/></svg>
<svg style="top:89.5px" viewBox="0 0 16 16"><rect x="4.900" y="3.800" width="6.200" height="9.200" rx="1.100" transform="rotate(-45 8 8.400)" fill="#dfe9ee" stroke="#5b7886" stroke-width="1.400"/><path d="M10.200 2a5.600 5.600 0 0 1 4.200 4.200" fill="none" stroke="#5b7886" stroke-width="1"/></svg>
<svg style="top:113.4px" viewBox="0 0 16 16"><rect x="4.900" y="3.800" width="6.200" height="9.200" rx="1.100" transform="rotate(45 8 8.400)" fill="#dfe9ee" stroke="#5b7886" stroke-width="1.400"/><path d="M5.800 2a5.600 5.600 0 0 0-4.200 4.200" fill="none" stroke="#5b7886" stroke-width="1"/></svg>
<svg style="top:137.3px" viewBox="0 0 16 16"><path d="M2.600 4.800h2.300l.9-1.400h4.400l.9 1.400h2.300v7.800H2.600z" fill="#5b7886"/><circle cx="8" cy="8.500" r="2.100" fill="none" stroke="#e6edf0" stroke-width="1.100"/></svg>
<svg style="top:161.2px" viewBox="0 0 16 16"><circle cx="6.700" cy="6.300" r="3" fill="none" stroke="#5b7886" stroke-width="1.300"/><path d="M9 8.700l3.600 3.700" stroke="#5b7886" stroke-width="1.500"/><path d="M5.400 6.300h2.600M6.700 5v2.600" stroke="#5b7886" stroke-width=".8"/></svg>
<svg style="top:184.9px" viewBox="0 0 16 16"><path d="M11.400 3.600v9L4.800 8.100z" fill="none" stroke="#5b7886" stroke-width="1.300" stroke-linejoin="round"/></svg>
<svg style="top:209.0px" viewBox="0 0 16 16"><circle cx="8" cy="8" r="3.900" fill="none" stroke="#5b7886" stroke-width="1.300"/></svg>
<svg style="top:232.9px" viewBox="0 0 16 16"><rect x="4.300" y="4.300" width="7.400" height="7.400" fill="none" stroke="#5b7886" stroke-width="1.300"/></svg>
<svg style="top:256.8px" viewBox="0 0 16 16"><circle cx="5" cy="8" r=".9" fill="#5b7886"/><circle cx="8" cy="8" r=".9" fill="#5b7886"/><circle cx="11" cy="8" r=".9" fill="#5b7886"/></svg>
</div>

</div></div></body></html>
